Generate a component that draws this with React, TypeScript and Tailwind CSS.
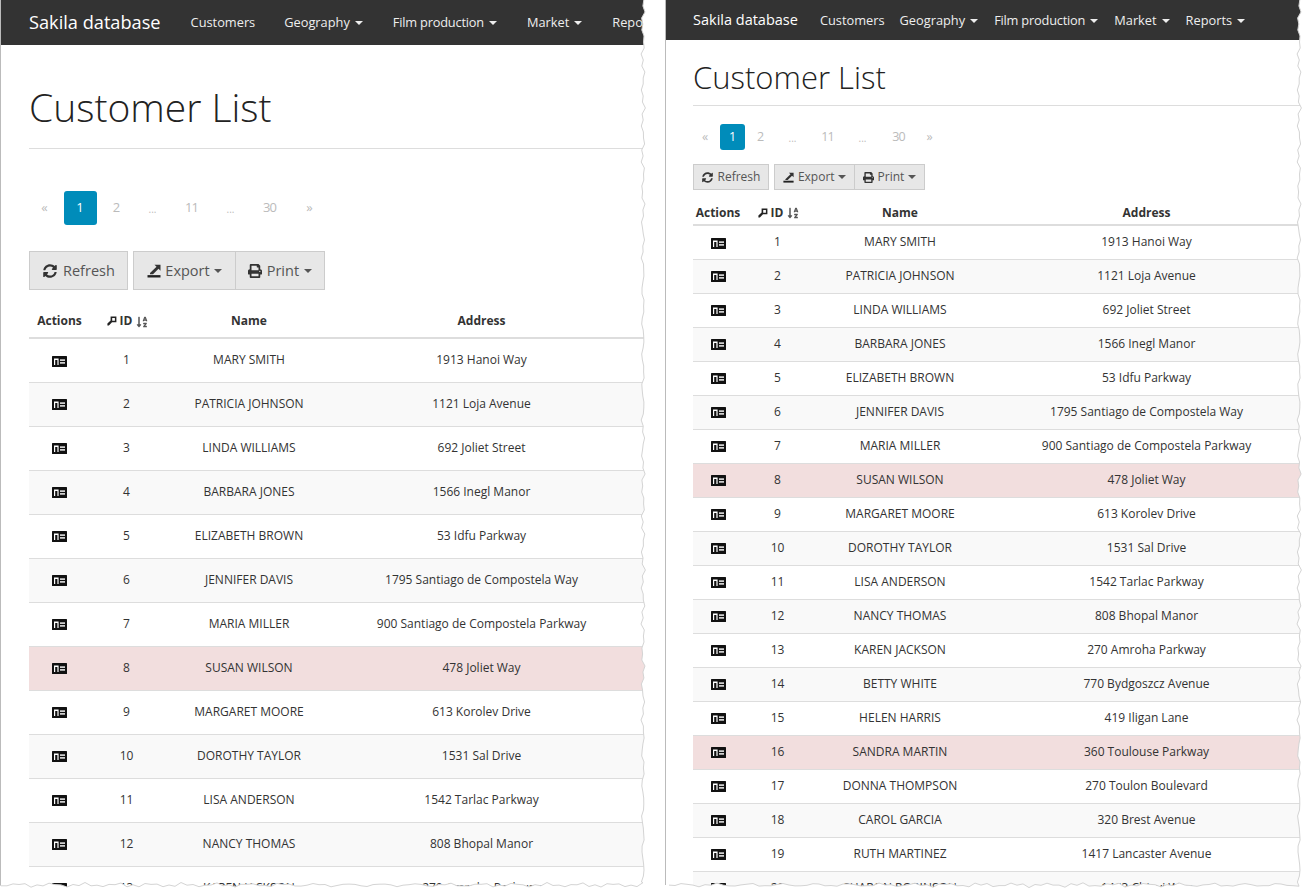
import { FaPrint, FaSortAlphaDown, FaSyncAlt } from "react-icons/fa";

type Size = "lg" | "sm";

const customers: [string, string][] = [
  ["MARY SMITH", "1913 Hanoi Way"],
  ["PATRICIA JOHNSON", "1121 Loja Avenue"],
  ["LINDA WILLIAMS", "692 Joliet Street"],
  ["BARBARA JONES", "1566 Inegl Manor"],
  ["ELIZABETH BROWN", "53 Idfu Parkway"],
  ["JENNIFER DAVIS", "1795 Santiago de Compostela Way"],
  ["MARIA MILLER", "900 Santiago de Compostela Parkway"],
  ["SUSAN WILSON", "478 Joliet Way"],
  ["MARGARET MOORE", "613 Korolev Drive"],
  ["DOROTHY TAYLOR", "1531 Sal Drive"],
  ["LISA ANDERSON", "1542 Tarlac Parkway"],
  ["NANCY THOMAS", "808 Bhopal Manor"],
  ["KAREN JACKSON", "270 Amroha Parkway"],
  ["BETTY WHITE", "770 Bydgoszcz Avenue"],
  ["HELEN HARRIS", "419 Iligan Lane"],
  ["SANDRA MARTIN", "360 Toulouse Parkway"],
  ["DONNA THOMPSON", "270 Toulon Boulevard"],
  ["CAROL GARCIA", "320 Brest Avenue"],
  ["RUTH MARTINEZ", "1417 Lancaster Avenue"],
  ["SHARON ROBINSON", "1463 Chiayi Way"],
];

const highlighted = [8, 16];
const menus = ["Geography", "Film production", "Market", "Reports"];

const pages = {
  lg: [
    { label: "«", w: "w-[31px]" },
    { label: "1", w: "w-[33px]", active: true },
    { label: "2", w: "w-[33px]" },
    { label: "...", w: "w-[32px]", dots: true },
    { label: "11", w: "w-[39px]" },
    { label: "...", w: "w-[32px]", dots: true },
    { label: "30", w: "w-[39px]" },
    { label: "»", w: "w-[34px]" },
  ],
  sm: [
    { label: "«", w: "w-[24px]" },
    { label: "1", w: "w-[25px]", active: true },
    { label: "2", w: "w-[25px]" },
    { label: "...", w: "w-[33px]", dots: true },
    { label: "11", w: "w-[31px]" },
    { label: "...", w: "w-[33px]", dots: true },
    { label: "30", w: "w-[33px]" },
    { label: "»", w: "w-[23px]" },
  ],
};

function IdCard() {
  return (
    <svg viewBox="0 0 15 11" className="inline-block h-[11px] w-[15px] align-middle">
      <rect x="0" y="0" width="15" height="11" rx="0.5" fill="#111" />
      <path d="M2 9V2.6h4.6V9H5.4V4H3.2v5z" fill="#fff" />
      <rect x="8" y="3.4" width="5" height="1.4" fill="#fff" />
      <rect x="8" y="6.2" width="5" height="1.4" fill="#fff" />
    </svg>
  );
}

function KeyIcon() {
  return (
    <svg viewBox="0 0 10 10" className="mr-[3px] inline-block h-[10px] w-[10px] align-[-1px]">
      <path
        d="M3.6.6h5.8v5.6H5L1.9 9.4H.4V7.6l3.2-3.1zM5.2 2.1v2.6h2.7V2.1z"
        fill="#222"
        fillRule="evenodd"
      />
    </svg>
  );
}

function ExportIcon({ className }: { className: string }) {
  return (
    <svg viewBox="0 0 14 13" className={className}>
      <path d="M.5 10.6h13V13H.5z" fill="#222" />
      <path d="M7.5.3h6v6l-2-2L6 9.8H3V8.6l6.5-6.3z" fill="#333" />
    </svg>
  );
}

function Caret() {
  return (
    <span className="inline-block border-x-[4px] border-t-[4px] border-x-transparent border-t-current align-middle" />
  );
}

// wavy edge of the cut-out screenshot
function wave(i: number) {
  return Math.sin(i * 0.19) * 1.1 + Math.sin(i * 0.53 + 1) * 0.9 + Math.sin(i * 1.7) * 0.4;
}

function TornEdge({ width, height }: { width: number; height: number }) {
  const pts: string[] = [];
  for (let y = 0; y <= height; y += 6) pts.push(`${(width + wave(y)).toFixed(1)},${y}`);
  for (let x = width; x >= 0; x -= 6) pts.push(`${x},${(height + wave(x + 40) * 1.1).toFixed(1)}`);
  const edge = "M" + pts.join(" L");
  const outer = `${edge} L-2,${height} L-2,${height + 12} L${width + 30},${height + 12} L${width + 30},0 Z`;
  return (
    <svg className="pointer-events-none absolute top-0 left-0 h-full w-full">
      <path d={outer} fill="#fff" />
      <path d={edge} fill="none" stroke="#d4d4d4" strokeWidth="1" />
    </svg>
  );
}

function Navbar({ size }: { size: Size }) {
  const lg = size === "lg";
  return (
    <div
      className={
        lg
          ? "flex h-[45px] items-center bg-[#333] pl-[28px] whitespace-nowrap text-[12.8px] text-[#eee]"
          : "flex h-[40px] items-center bg-[#333] pl-[27px] whitespace-nowrap text-[12.8px] text-[#eee]"
      }
    >
      <span className={lg ? "mr-[30px] text-[18.2px] text-white" : "mr-[22px] text-[14.5px] text-white"}>
        Sakila database
      </span>
      <div className={lg ? "flex gap-[30px]" : "flex gap-[16px] pt-px"}>
        <span className="-mr-px">Customers</span>
        {menus.map((m) => (
          <span key={m} className="flex items-center gap-[5px]">
            <span className={m === "Film production" ? "tracking-[-0.2px]" : ""}>{m}</span>
            <Caret />
          </span>
        ))}
      </div>
    </div>
  );
}

function Pagination({ size }: { size: Size }) {
  const lg = size === "lg";
  const cell = lg ? "flex h-[34px] items-center justify-center" : "flex h-[26px] items-center justify-center";
  return (
    <div
      className={
        lg
          ? "mt-[42px] flex gap-[3.5px] text-[13px] text-[#bbb]"
          : "mt-[18px] flex gap-[3px] text-[12.5px] text-[#bbb]"
      }
    >
      {pages[size].map((p, i) => (
        <span
          key={i}
          className={`${cell} ${p.w} ${p.active ? "rounded-[3px] bg-[#008cba] text-white" : ""} ${
            p.dots ? "pt-[2px] text-[10px]" : ""
          } ${p.label.length === 2 ? "tracking-[-1px]" : ""}`}
        >
          {p.label}
        </span>
      ))}
    </div>
  );
}

function Toolbar({ size }: { size: Size }) {
  const lg = size === "lg";
  const btn = lg
    ? "flex h-[39px] items-center gap-[4.5px] border border-[#ccc] bg-[#e7e7e7] px-[12.5px] text-[14.5px] text-[#555]"
    : "flex h-[26px] items-center gap-[3.5px] border border-[#ccc] bg-[#e7e7e7] px-[8px] text-[12px] text-[#555]";
  const icon = lg ? "h-[14px] w-[14px] text-[#333]" : "h-[11px] w-[11px] text-[#333]";
  return (
    <div className={lg ? "mt-[26px] flex gap-[5px]" : "mt-[14px] flex gap-[5px]"}>
      <div className={btn}>
        <FaSyncAlt className={icon} />
        <span className={lg ? "ml-[2px]" : "ml-px"}>Refresh</span>
      </div>
      <div className="flex">
        <div className={btn}>
          <ExportIcon className={icon} />
          <span>Export</span>
          <Caret />
        </div>
        <div className={`${btn} -ml-px`}>
          <FaPrint className={icon} />
          <span>Print</span>
          <Caret />
        </div>
      </div>
    </div>
  );
}

function CustomerTable({ size }: { size: Size }) {
  const lg = size === "lg";
  const rows = lg ? customers.slice(0, 13) : customers;
  const rowH = lg ? "h-[44px]" : "h-[34px]";
  const th = lg ? "pt-[2px] font-bold" : "font-bold";
  return (
    <table className={lg ? "mt-[13px] w-[640px] table-fixed text-[12px]" : "mt-[11px] w-[640px] table-fixed text-[12px]"}>
      <colgroup>
        <col className={lg ? "w-[61px]" : "w-[50px]"} />
        <col className={lg ? "w-[73px]" : "w-[69px]"} />
        <col className={lg ? "w-[172px]" : "w-[176px]"} />
        <col className={lg ? "w-[293px]" : "w-[317px]"} />
        <col />
      </colgroup>
      <thead>
        <tr className={lg ? "h-[35px] border-b-2 border-[#ddd]" : "h-[24px] border-b-2 border-[#ddd]"}>
          <th className={th}>Actions</th>
          <th className={`${th} pl-[2px]`}>
            <KeyIcon />
            ID
            <FaSortAlphaDown className="ml-[4px] inline-block h-[12px] w-[12px] text-[#555]" />
          </th>
          <th className={th}>Name</th>
          <th className={th}>Address</th>
          <th />
        </tr>
      </thead>
      <tbody>
        {rows.map(([name, address], i) => {
          const id = i + 1;
          const bg = highlighted.includes(id) ? "bg-[#f2dede]" : id % 2 === 0 ? "bg-[#f9f9f9]" : "bg-white";
          return (
            <tr key={id} className={`${rowH} ${bg} border-b border-[#ddd] text-center`}>
              <td>
                <IdCard />
              </td>
              <td>{id}</td>
              <td>{name}</td>
              <td>{address}</td>
              <td />
            </tr>
          );
        })}
      </tbody>
    </table>
  );
}

function Panel({ size }: { size: Size }) {
  const lg = size === "lg";
  return (
    <div
      className={
        lg
          ? "relative h-[892px] w-[665px] shrink-0 overflow-hidden"
          : "relative h-[892px] w-[638px] shrink-0 overflow-hidden"
      }
    >
      <div className="h-full border-l border-[#bbb]">
        <Navbar size={size} />
        <div className={lg ? "pl-[28px]" : "pl-[27px]"}>
          <div
            className={
              lg
                ? "border-b border-[#ddd] pt-[36px] pb-[15px] text-[39px] leading-[52px] font-light text-[#222]"
                : "border-b border-[#ddd] pt-[18px] pb-[9px] text-[31px] leading-[38px] font-light text-[#222]"
            }
          >
            Customer List
          </div>
          <Pagination size={size} />
          <Toolbar size={size} />
          <CustomerTable size={size} />
        </div>
      </div>
      <TornEdge width={lg ? 643 : 634} height={885} />
    </div>
  );
}

export default function App() {
  return (
    <div className="flex h-[892px] w-[1303px] overflow-hidden bg-white font-['Open_Sans',sans-serif] text-[#333]">
      <Panel size="lg" />
      <Panel size="sm" />
    </div>
  );
}
